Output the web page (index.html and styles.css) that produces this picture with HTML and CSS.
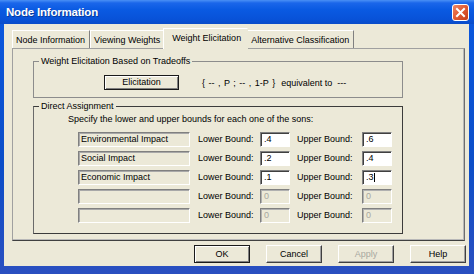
FILE: index.html
```html
<!DOCTYPE html>
<html>
<head>
<meta charset="utf-8">
<link rel="stylesheet" href="styles.css">
</head>
<body>
<div class="window">
  <div class="titlebar">
    <span class="title">Node Information</span>
    <svg class="close" width="17" height="17" viewBox="0 0 17 17">
      <defs>
        <linearGradient id="cg" x1="0" y1="0" x2="1" y2="1">
          <stop offset="0" stop-color="#f08a6a"/>
          <stop offset="0.5" stop-color="#e05a33"/>
          <stop offset="1" stop-color="#c23c18"/>
        </linearGradient>
      </defs>
      <rect x="0.5" y="0.5" width="16" height="16" rx="2.5" fill="url(#cg)" stroke="#ffffff" stroke-width="1"/>
      <path d="M5 5 L12 12 M12 5 L5 12" stroke="#ffffff" stroke-width="2" stroke-linecap="square"/>
    </svg>
  </div>
  <div class="client">
    <div class="tabs">
      <div class="tab">Node Information</div>
      <div class="tab">Viewing Weights</div>
      <div class="tab active">Weight Elicitation</div>
      <div class="tab">Alternative Classification</div>
    </div>
    <div class="panel">
      <fieldset class="group g1">
        <legend>Weight Elicitation Based on Tradeoffs</legend>
        <div class="g1row">
          <div class="btn default elic">Elicitation</div>
          <span class="formula">{ -- , P ; -- , 1-P }</span>
          <span class="equiv">equivalent to</span>
          <span class="dash">---</span>
        </div>
      </fieldset>
      <fieldset class="group g2">
        <legend>Direct Assignment</legend>
        <div class="hint">Specify the lower and upper bounds for each one of the sons:</div>
        <div class="rows">
          <div class="name">Environmental Impact</div>
          <div class="lbl lo">Lower Bound:</div>
          <div class="field">.4</div>
          <div class="lbl up">Upper Bound:</div>
          <div class="field">.6</div>

          <div class="name">Social Impact</div>
          <div class="lbl lo">Lower Bound:</div>
          <div class="field">.2</div>
          <div class="lbl up">Upper Bound:</div>
          <div class="field">.4</div>

          <div class="name">Economic Impact</div>
          <div class="lbl lo">Lower Bound:</div>
          <div class="field">.1</div>
          <div class="lbl up">Upper Bound:</div>
          <div class="field">.3<span class="caret"></span></div>

          <div class="name"></div>
          <div class="lbl lo">Lower Bound:</div>
          <div class="field disabled">0</div>
          <div class="lbl up">Upper Bound:</div>
          <div class="field disabled">0</div>

          <div class="name"></div>
          <div class="lbl lo">Lower Bound:</div>
          <div class="field disabled">0</div>
          <div class="lbl up">Upper Bound:</div>
          <div class="field disabled">0</div>
        </div>
      </fieldset>
    </div>
    <div class="buttons">
      <div class="btn default big">OK</div>
      <div class="btn big">Cancel</div>
      <div class="btn big off">Apply</div>
      <div class="btn big">Help</div>
    </div>
  </div>
</div>
</body>
</html>
```

FILE: styles.css
```css
html, body {
  margin: 0;
  padding: 0;
}
body {
  width: 474px;
  height: 274px;
  overflow: hidden;
  background: #1850d0;
  font-family: "Liberation Sans", Arial, sans-serif;
  font-size: 9px;
  color: #000;
}
.window {
  width: 474px;
  height: 274px;
  display: flex;
  flex-direction: column;
  background: linear-gradient(#0a58e0, #0c4ec8 60%, #2a4fc0);
}
.titlebar {
  height: 24px;
  box-sizing: border-box;
  display: flex;
  align-items: center;
  justify-content: space-between;
  padding: 0 5px 0 6px;
  background: linear-gradient(#4a90f5 0, #1a66ea 3px, #0a5ae2 40%, #0852d8 80%, #0a4cc8 100%);
}
.title {
  color: #fff;
  font-weight: bold;
  font-size: 11.5px;
  letter-spacing: -0.2px;
  text-shadow: 1px 1px 0 #0a3a9a;
}
.close {
  display: block;
  margin-top: 1px;
}
.client {
  margin: 0 5px 0 4px;
  height: 242px;
  background: #ece9d8;
  display: flex;
  flex-direction: column;
}
.tabs {
  display: flex;
  align-items: flex-end;
  height: 24px;
  box-sizing: border-box;
  padding-left: 8px;
}
.tab {
  height: 18px;
  line-height: 18px;
  padding: 0 4px 0 3px;
  box-sizing: border-box;
  border-left: 1px solid #fff;
  border-top: 1px solid #fff;
  border-right: 1px solid #808080;
  white-space: nowrap;
  color: #000;
}
.tab.active {
  height: 21px;
  line-height: 19px;
  margin: 0 -1px -1px -2px;
  padding: 0 6px 0 8px;
  position: relative;
  z-index: 2;
  background: #ece9d8;
  border-right: 1px solid #ece9d8;
}
.panel {
  margin-left: 8px;
  width: 453px;
  height: 193px;
  box-sizing: border-box;
  border: 1px solid #a0a0a0;
  border-right-color: #6e6e6e;
  border-bottom-color: #404040;
  box-shadow: inset -1px -1px 0 #b8b8b8;
  padding: 7px 0 0 20px;
  display: flex;
  flex-direction: column;
}
.group {
  margin: 0;
  padding: 0;
  width: 370px;
  box-sizing: border-box;
  min-width: 0;
}
.group legend {
  margin-left: 5px;
  padding: 0 2px;
  line-height: 11px;
  height: 11px;
}
.g1 {
  border: 1px solid #8c8c8c;
  height: 42px;
}
.g1row {
  display: flex;
  align-items: center;
  padding: 8px 0 0 70px;
}
.formula {
  margin-left: 23px;
  word-spacing: 1px;
}
.equiv {
  margin-left: 6px;
}
.dash {
  margin-left: 5px;
}
.g2 {
  margin-top: 3px;
  border: 1px solid #3c3c3c;
  border-left-color: #6a6a6a;
  height: 133px;
}
.hint {
  line-height: 11px;
  padding: 2px 0 0 34px;
}
.rows {
  display: grid;
  grid-template-columns: 112px 70px 30px 72px 30px;
  grid-auto-rows: 15px;
  row-gap: 4px;
  margin: 7px 0 0 44px;
}
.name {
  box-sizing: border-box;
  border-top: 1px solid #808080;
  border-left: 1px solid #808080;
  border-right: 1px solid #fff;
  border-bottom: 1px solid #fff;
  box-shadow: inset 1px 1px 0 #a8a8a8;
  background: #ece9d8;
  line-height: 13px;
  padding-left: 2px;
  white-space: nowrap;
}
.lbl {
  line-height: 15px;
  white-space: nowrap;
}
.lbl.lo {
  padding-left: 8px;
}
.lbl.up {
  padding-left: 7px;
}
.field {
  box-sizing: border-box;
  border-top: 1px solid #808080;
  border-left: 1px solid #808080;
  border-right: 1px solid #fff;
  border-bottom: 1px solid #fff;
  box-shadow: inset 1px 1px 0 #404040;
  background: #fff;
  line-height: 13px;
  padding-left: 3px;
  display: flex;
  align-items: center;
}
.field.disabled {
  background: #ece9d8;
  color: #a8a8a0;
  box-shadow: inset 1px 1px 0 #b0b0b0;
}
.caret {
  display: inline-block;
  width: 1px;
  height: 9px;
  background: #000;
}
.btn {
  box-sizing: border-box;
  text-align: center;
  background: #ece9d8;
  border-top: 1px solid #fff;
  border-left: 1px solid #fff;
  border-right: 1px solid #404040;
  border-bottom: 1px solid #404040;
  box-shadow: inset -1px -1px 0 #a0a0a0;
  white-space: nowrap;
}
.btn.default {
  border: 1px solid #1a1a1a;
  box-shadow: inset 1px 1px 0 #fff, inset -1px -1px 0 #808080;
}
.elic {
  width: 75px;
  height: 15px;
  line-height: 13px;
}
.buttons {
  display: flex;
  justify-content: flex-end;
  gap: 16px;
  margin-top: 4px;
  padding-right: 3px;
}
.big {
  width: 56px;
  height: 18px;
  line-height: 16px;
}
.btn.off {
  color: #a8a8a0;
}
```
